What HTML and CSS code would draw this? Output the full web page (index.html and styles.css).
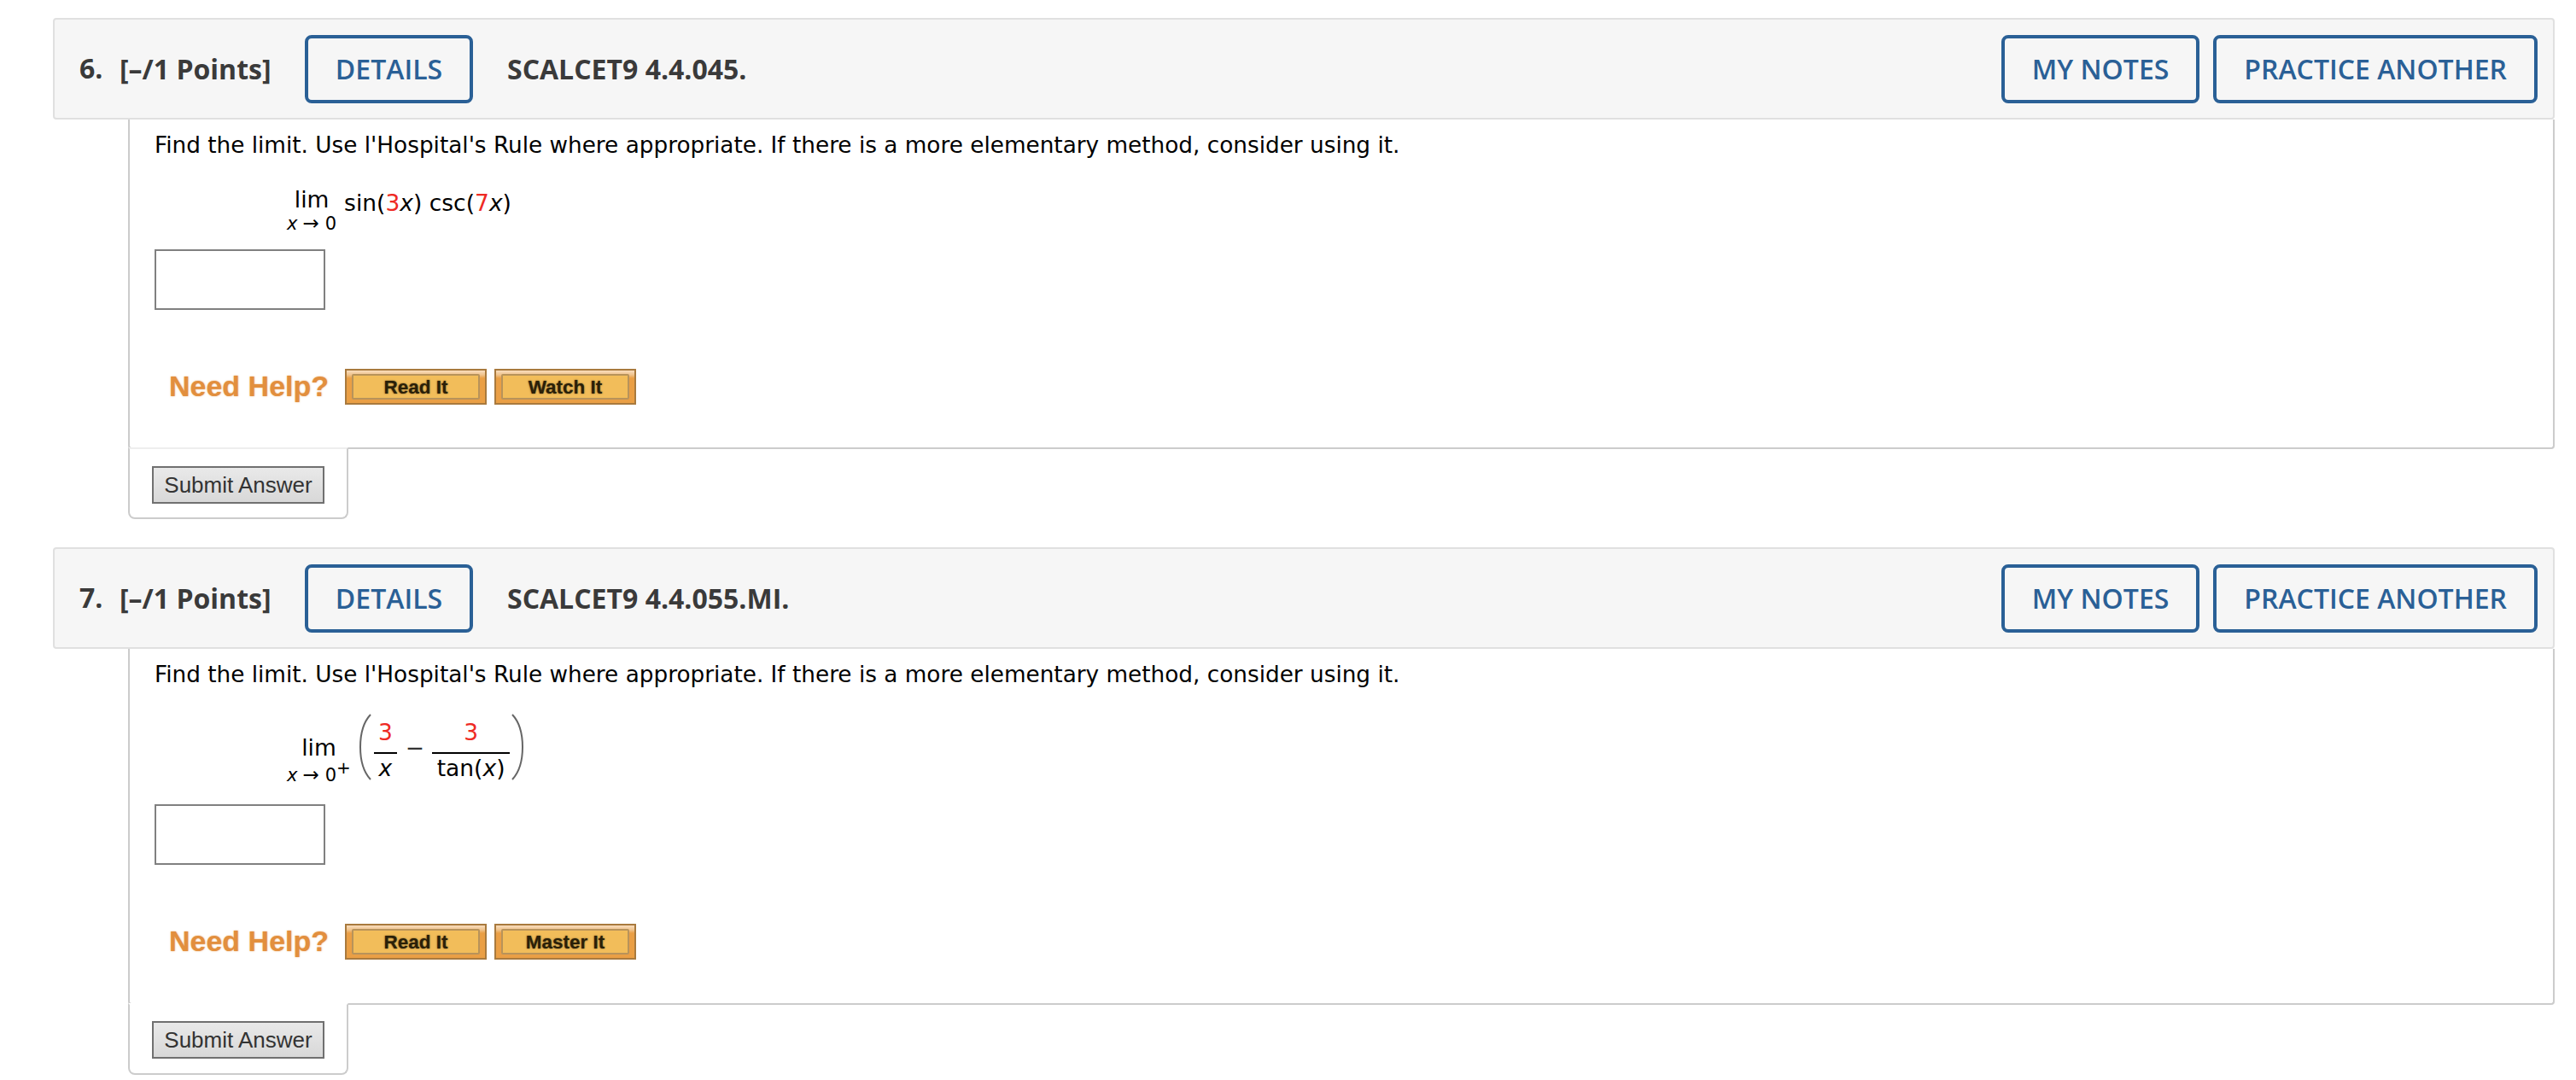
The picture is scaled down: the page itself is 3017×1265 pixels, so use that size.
FILE: index.html
```html
<!DOCTYPE html>
<html lang="en">
<head>
    <meta charset="UTF-8">
    <title>SCALCET9 4.4 Questions</title>
    <link rel="stylesheet" href="styles.css">
</head>
<body>
    <div class="question">
        <div class="q-header">
            <span class="q-num">6.</span>
            <span class="q-points">[&ndash;/1 Points]</span>
            <a class="q-btn details">DETAILS</a>
            <span class="q-code">SCALCET9 4.4.045.</span>
            <div class="q-actions">
                <a class="q-btn">MY NOTES</a>
                <a class="q-btn">PRACTICE ANOTHER</a>
            </div>
        </div>
        <div class="q-body q6">
            <p class="prompt">Find the limit. Use l'Hospital's Rule where appropriate. If there is a more elementary method, consider using it.</p>
            <div class="math math-line">
                <div class="lim"><span>lim</span><span class="under"><i>x</i><span class="arrow">&rarr;</span>0</span></div>
                <div class="expr">sin(<span class="red">3</span><i>x</i>) csc(<span class="red">7</span><i>x</i>)</div>
            </div>
            <input class="answer" type="text">
            <div class="help">
                <span class="help-label">Need Help?</span>
                <a class="help-btn"><span>Read It</span></a>
                <a class="help-btn"><span>Watch It</span></a>
            </div>
        </div>
        <div class="submit-tab first"><button class="submit" type="button">Submit Answer</button></div>
    </div>

    <div class="question">
        <div class="q-header">
            <span class="q-num">7.</span>
            <span class="q-points">[&ndash;/1 Points]</span>
            <a class="q-btn details">DETAILS</a>
            <span class="q-code">SCALCET9 4.4.055.MI.</span>
            <div class="q-actions">
                <a class="q-btn">MY NOTES</a>
                <a class="q-btn">PRACTICE ANOTHER</a>
            </div>
        </div>
        <div class="q-body q7">
            <p class="prompt">Find the limit. Use l'Hospital's Rule where appropriate. If there is a more elementary method, consider using it.</p>
            <div class="math math-frac">
                <div class="lim lim-low"><span>lim</span><span class="under"><i>x</i><span class="arrow">&rarr;</span>0<sup>+</sup></span></div>
                <svg class="paren" width="17" height="78" viewBox="0 0 17 78"><path d="M15 1 C-1 18 -1 60 15 77" fill="none" stroke="#666" stroke-width="2"/></svg>
                <div class="frac small"><span class="red num">3</span><span class="den"><i>x</i></span></div>
                <span class="minus">&minus;</span>
                <div class="frac"><span class="red num">3</span><span class="den">tan(<i>x</i>)</span></div>
                <svg class="paren" width="17" height="78" viewBox="0 0 17 78"><path d="M2 1 C18 18 18 60 2 77" fill="none" stroke="#666" stroke-width="2"/></svg>
            </div>
            <input class="answer" type="text">
            <div class="help">
                <span class="help-label">Need Help?</span>
                <a class="help-btn"><span>Read It</span></a>
                <a class="help-btn"><span>Master It</span></a>
            </div>
        </div>
        <div class="submit-tab second"><button class="submit" type="button">Submit Answer</button></div>
    </div>
</body>
</html>
```

FILE: styles.css
```css
body {
    margin: 0;
    padding: 21px 25px 0 62px;
    background: #fff;
    font-family: "DejaVu Sans", sans-serif;
    color: #000;
}
p {
    margin: 0;
}
.question + .question {
    margin-top: 33px;
}
.q-header {
    display: flex;
    align-items: center;
    box-sizing: border-box;
    height: 119px;
    padding: 0 18px 0 29px;
    background: #f6f6f6;
    border: 2px solid #e0e0e0;
    border-radius: 4px;
    font-family: "Open Sans", sans-serif;
    font-weight: 700;
    font-size: 32px;
    color: #3a3a3a;
}
.q-num {
    width: 47px;
    padding-bottom: 3px;
}
.q-points {
    width: 217px;
    padding-bottom: 1px;
}
.q-code {
    margin-left: 40px;
    padding-bottom: 1px;
}
.q-actions {
    display: flex;
    gap: 16px;
    margin-left: auto;
}
.q-btn {
    display: flex;
    align-items: center;
    justify-content: center;
    box-sizing: border-box;
    height: 80px;
    padding: 0 32px 1px;
    border: 4px solid #2a6096;
    border-radius: 8px;
    font-weight: 600;
    font-size: 32px;
    color: #2a6096;
}
.q-btn.details {
    width: 197px;
    padding: 0 0 1px;
}
.q-body {
    box-sizing: border-box;
    margin-left: 88px;
    padding: 14px 0 0 29px;
    border: 2px solid #ccc;
    border-top: 0;
    border-radius: 0 0 4px 4px;
}
.q6 {
    height: 386px;
}
.q7 {
    height: 417px;
}
.prompt {
    font-size: 26.3px;
    line-height: 32px;
}
.red {
    color: #ee2a24;
}
.math {
    display: flex;
    font-size: 26.5px;
    margin-left: 155px;
}
.math-line {
    align-items: flex-start;
    margin-top: 33px;
    height: 73px;
}
.math-frac {
    align-items: center;
    margin-top: 2px;
    height: 134px;
}
.lim {
    display: flex;
    flex-direction: column;
    align-items: center;
    line-height: 30px;
}
.lim-low {
    margin-top: 30px;
}
.under {
    font-size: 21px;
    line-height: 24px;
    white-space: nowrap;
}
.lim-low .under {
    margin-top: 4px;
}
.under sup {
    font-size: 20px;
    line-height: 0;
    vertical-align: 9px;
}
.arrow {
    margin: 0 7px 0 6px;
    font-size: 23px;
}
.expr {
    margin: 4px 0 0 9px;
    line-height: 30px;
}
.paren {
    margin-left: 8px;
}
.frac {
    display: flex;
    flex-direction: column;
    align-items: center;
    min-width: 91px;
    margin-top: 8px;
    line-height: 34px;
}
.frac.small {
    min-width: 27px;
    margin-left: 2px;
}
.num {
    padding-bottom: 6px;
}
.den {
    width: 100%;
    text-align: center;
    border-top: 2px solid #000;
}
.minus {
    margin: 0 9px 0 10px;
    color: #333;
}
.frac + .paren {
    margin-left: 1px;
}
.answer {
    display: block;
    box-sizing: border-box;
    width: 200px;
    height: 71px;
    padding: 0;
    border: 2px solid #808080;
    background: #fff;
    outline: 0;
}
.help {
    display: flex;
    align-items: center;
    margin: 69px 0 0 17px;
}
.help-label {
    width: 206px;
    padding-bottom: 2px;
    font-family: "Liberation Sans", sans-serif;
    font-weight: bold;
    font-size: 34px;
    color: #e28f3e;
    text-shadow: 0 0 2px rgba(226, 143, 62, 0.7);
}
.help-btn {
    box-sizing: border-box;
    width: 166px;
    height: 42px;
    margin-right: 9px;
    padding: 4px 6px;
    background: linear-gradient(#f8dcbc 0, #f0c48e 5px, #ea9f45 9px);
    border: 2px solid #a97a3e;
}
.help-btn span {
    display: block;
    box-sizing: border-box;
    height: 30px;
    background: #f2bd5a;
    border: 2px solid #b8935a;
    border-radius: 2px;
    font-family: "Liberation Sans", sans-serif;
    font-weight: bold;
    font-size: 22.5px;
    line-height: 27px;
    text-align: center;
    color: #2a2008;
    text-shadow: 0 0 2px rgba(42, 32, 8, 0.7);
}
.submit-tab {
    box-sizing: border-box;
    width: 258px;
    height: 84px;
    margin: -2px 0 0 88px;
    padding: 20px 0 0 26px;
    background: #fff;
    border: 2px solid #ccc;
    border-top: 2px solid #fff;
    border-radius: 0 0 8px 8px;
}
.submit-tab.first {
    border-top-color: #eee;
}
.submit-tab.second {
    padding-top: 19px;
}
.submit {
    display: block;
    box-sizing: border-box;
    width: 202px;
    height: 44px;
    padding: 0;
    background: linear-gradient(#e9e9e9, #d8d8d8);
    border: 2px solid #707070;
    font-family: "Liberation Sans", sans-serif;
    font-size: 26px;
    color: #333;
}
```
